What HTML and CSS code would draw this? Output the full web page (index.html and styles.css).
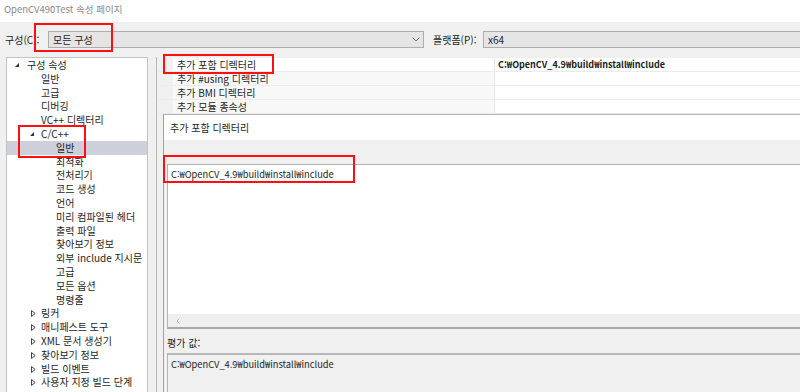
FILE: index.html
```html
<!DOCTYPE html>
<html lang="ko">
<head>
  <meta charset="UTF-8" />
  <title>OpenCV490Test 속성 페이지</title>
  <link rel="stylesheet" href="styles.css">
</head>
<body>
<div class="window">

  <!-- TITLE -->
  <div class="titlebar">OpenCV490Test 속성 페이지</div>

  <!-- CONFIG / PLATFORM -->
  <div class="toolbar">
    <span class="label label-config">구성(C):</span>
    <div class="combo combo-config">
      <span>모든 구성</span>
      <svg class="chevron" width="8" height="5" viewBox="0 0 8 5"><path d="M0.5 0.5 L4 4 L7.5 0.5" fill="none" stroke="#707070" stroke-width="1"/></svg>
    </div>
    <span class="label label-platform">플랫폼(P):</span>
    <div class="combo combo-platform"><span>x64</span></div>
  </div>

  <div class="main">
    <!-- TREE -->
    <ul class="tree">
      <li class="lvl0"><i class="caret-open"></i>구성 속성</li>
      <li class="lvl1">일반</li>
      <li class="lvl1">고급</li>
      <li class="lvl1">디버깅</li>
      <li class="lvl1">VC++ 디렉터리</li>
      <li class="lvl1"><i class="caret-open"></i>C/C++</li>
      <li class="lvl2 selected">일반</li>
      <li class="lvl2">최적화</li>
      <li class="lvl2">전처리기</li>
      <li class="lvl2">코드 생성</li>
      <li class="lvl2">언어</li>
      <li class="lvl2">미리 컴파일된 헤더</li>
      <li class="lvl2">출력 파일</li>
      <li class="lvl2">찾아보기 정보</li>
      <li class="lvl2">외부 include 지시문</li>
      <li class="lvl2">고급</li>
      <li class="lvl2">모든 옵션</li>
      <li class="lvl2">명령줄</li>
      <li class="lvl1"><svg class="caret-closed" width="5" height="7" viewBox="0 0 5 7"><path d="M0.5 0.5 L4.2 3.5 L0.5 6.5 Z" fill="#fff" stroke="#444" stroke-width="1"/></svg>링커</li>
      <li class="lvl1"><svg class="caret-closed" width="5" height="7" viewBox="0 0 5 7"><path d="M0.5 0.5 L4.2 3.5 L0.5 6.5 Z" fill="#fff" stroke="#444" stroke-width="1"/></svg>매니페스트 도구</li>
      <li class="lvl1"><svg class="caret-closed" width="5" height="7" viewBox="0 0 5 7"><path d="M0.5 0.5 L4.2 3.5 L0.5 6.5 Z" fill="#fff" stroke="#444" stroke-width="1"/></svg>XML 문서 생성기</li>
      <li class="lvl1"><svg class="caret-closed" width="5" height="7" viewBox="0 0 5 7"><path d="M0.5 0.5 L4.2 3.5 L0.5 6.5 Z" fill="#fff" stroke="#444" stroke-width="1"/></svg>찾아보기 정보</li>
      <li class="lvl1"><svg class="caret-closed" width="5" height="7" viewBox="0 0 5 7"><path d="M0.5 0.5 L4.2 3.5 L0.5 6.5 Z" fill="#fff" stroke="#444" stroke-width="1"/></svg>빌드 이벤트</li>
      <li class="lvl1"><svg class="caret-closed" width="5" height="7" viewBox="0 0 5 7"><path d="M0.5 0.5 L4.2 3.5 L0.5 6.5 Z" fill="#fff" stroke="#444" stroke-width="1"/></svg>사용자 지정 빌드 단계</li>
    </ul>

    <!-- PROPERTY GRID -->
    <div class="grid">
      <div class="row active">
        <div class="gutter"></div>
        <div class="name">추가 포함 디렉터리</div>
        <div class="value">C:₩OpenCV_4.9₩build₩install₩include</div>
      </div>
      <div class="row">
        <div class="gutter"></div>
        <div class="name">추가 #using 디렉터리</div>
        <div class="value"></div>
      </div>
      <div class="row">
        <div class="gutter"></div>
        <div class="name">추가 BMI 디렉터리</div>
        <div class="value"></div>
      </div>
      <div class="row">
        <div class="gutter"></div>
        <div class="name">추가 모듈 종속성</div>
        <div class="value"></div>
      </div>

      <!-- POPUP EDITOR -->
      <div class="popup">
        <div class="popup-title">추가 포함 디렉터리</div>
        <div class="popup-band"></div>
        <div class="editbox">
          <div class="edit-text path">C:₩OpenCV_4.9₩build₩install₩include</div>
          <div class="hscroll">
            <svg width="4" height="6" viewBox="0 0 4 6"><path d="M3.5 0.5 L1 3 L3.5 5.5" fill="none" stroke="#b4b4b4" stroke-width="1"/></svg>
          </div>
        </div>
        <div class="eval-label">평가 값:</div>
        <div class="evalbox path">C:₩OpenCV_4.9₩build₩install₩include</div>
      </div>
    </div>
  </div>

  <!-- RED ANNOTATION BOXES -->
  <div class="mark mark-config"></div>
  <div class="mark mark-cpp"></div>
  <div class="mark mark-prop"></div>
  <div class="mark mark-path"></div>
</div>
</body>
</html>
```

FILE: styles.css
```css
:root {
  --bg:#f0f0f0;
  --text:#1e1e1e;
  --border:#a0a0a0;
  --red:#ff1010;
}
* {
  box-sizing: border-box;
}
body {
  margin: 0;
  background: var(--bg);
  color: var(--text);
  font-family: "Noto Sans CJK KR", "Noto Sans", sans-serif;
  font-size: 10px;
  overflow: hidden;
}
.window {
  position: relative;
  width: 800px;
  height: 392px;
  overflow: hidden;
}
/* paths render a bit tighter than the hangul labels */
.path {
  font-size: 9.3px;
}

/* title */
.titlebar {
  height: 22px;
  background: #fff;
  padding-left: 4px;
  line-height: 19px;
  font-size: 9.5px;
  color: #8a8a8a;
}

/* config row */
.toolbar {
  height: 34px;
  display: flex;
  align-items: center;
  padding-left: 5px;
  padding-top: 1px;
}
.label-config { width: 43px; }
.label-platform { width: 50px; margin-left: 9px; }
.combo {
  height: 17px;
  display: flex;
  align-items: center;
  justify-content: space-between;
  padding: 0 3px 0 4px;
  background: #e5e5e5;
  border: 1px solid #adadad;
}
.combo-config { width: 376px; }
.combo-platform { flex: 1; margin-right: -3px; }

/* main area */
.main {
  display: flex;
  height: 336px;
  padding-left: 6px;
  padding-top: 1px;
  gap: 8px;
}

/* tree */
.tree {
  list-style: none;
  margin: 0;
  padding: 0;
  width: 142px;
  background: #fff;
  border: 1px solid #c4c4c4;
  border-bottom: none;
}
.tree li {
  position: relative;
  height: 13.8px;
  line-height: 13.8px;
  white-space: nowrap;
}
.tree .lvl0 { padding-left: 20px; }
.tree .lvl1 { padding-left: 34px; }
.tree .lvl2 { padding-left: 49px; }
.tree .selected { background: #cdcfdb; }
.caret-open {
  position: absolute;
  top: 5px;
  width: 0; height: 0;
  border-left: 4px solid transparent;
  border-bottom: 4px solid #333;
}
.lvl0 .caret-open { left: 8px; }
.lvl1 .caret-open { left: 23px; }
.caret-closed {
  position: absolute;
  left: 24px;
  top: 4px;
}

/* property grid */
.grid {
  position: relative;
  flex: 1;
  background: var(--bg);
  border-left: 1px solid #b8b8b8;
  padding-top: 1px;
}
.row {
  display: flex;
  height: 14px;
  line-height: 13px;
  border-bottom: 1px solid #ececec;
}
.gutter { width: 16px; background: var(--bg); }
.name {
  width: 321px;
  padding-left: 4px;
  background: #f8f8f8;
  white-space: nowrap;
}
.row.active .name { background: #fff; }
.value {
  flex: 1;
  background: #fff;
  border-left: 1px solid #e6e6e6;
  padding-left: 3px;
  font-size: 9px;
  font-weight: bold;
  white-space: nowrap;
}

/* popup editor */
.popup {
  position: absolute;
  left: 6px;
  top: 57px;
  right: 0;
  bottom: 0;
  display: flex;
  flex-direction: column;
  background: var(--bg);
  border-left: 1px solid var(--border);
  border-top: 1px solid #b4b4b4;
}
.popup-title {
  height: 25px;
  line-height: 25px;
  padding-left: 6px;
  background: #fff;
}
.popup-band { height: 24px; }
.editbox {
  margin-left: 3px;
  height: 165px;
  display: flex;
  flex-direction: column;
  background: #fff;
  border-top: 1px solid #b4b4b4;
  border-left: 1px solid #b4b4b4;
  border-bottom: 2px solid #a8a8a8;
}
.edit-text {
  flex: 1;
  padding: 2px 0 0 3px;
  line-height: 14px;
  white-space: nowrap;
}
.hscroll {
  height: 13px;
  background: #efefef;
  display: flex;
  align-items: center;
  padding-left: 8px;
}
.eval-label {
  height: 24px;
  line-height: 14px;
  padding: 7px 0 0 3px;
}
.evalbox {
  flex: 1;
  margin-left: 3px;
  padding: 2px 0 0 3px;
  line-height: 14px;
  border-top: 2px solid #b8b8b8;
  border-left: 1px solid #b4b4b4;
  white-space: nowrap;
}

/* red annotation boxes */
.mark {
  position: absolute;
  border: 2px solid var(--red);
}
.mark-config { left: 34px; top: 23px; width: 79px; height: 29px; }
.mark-cpp { left: 18px; top: 125px; width: 68px; height: 33px; }
.mark-prop { left: 163px; top: 54px; width: 111px; height: 20px; }
.mark-path { left: 163px; top: 155px; width: 192px; height: 28px; }
```
